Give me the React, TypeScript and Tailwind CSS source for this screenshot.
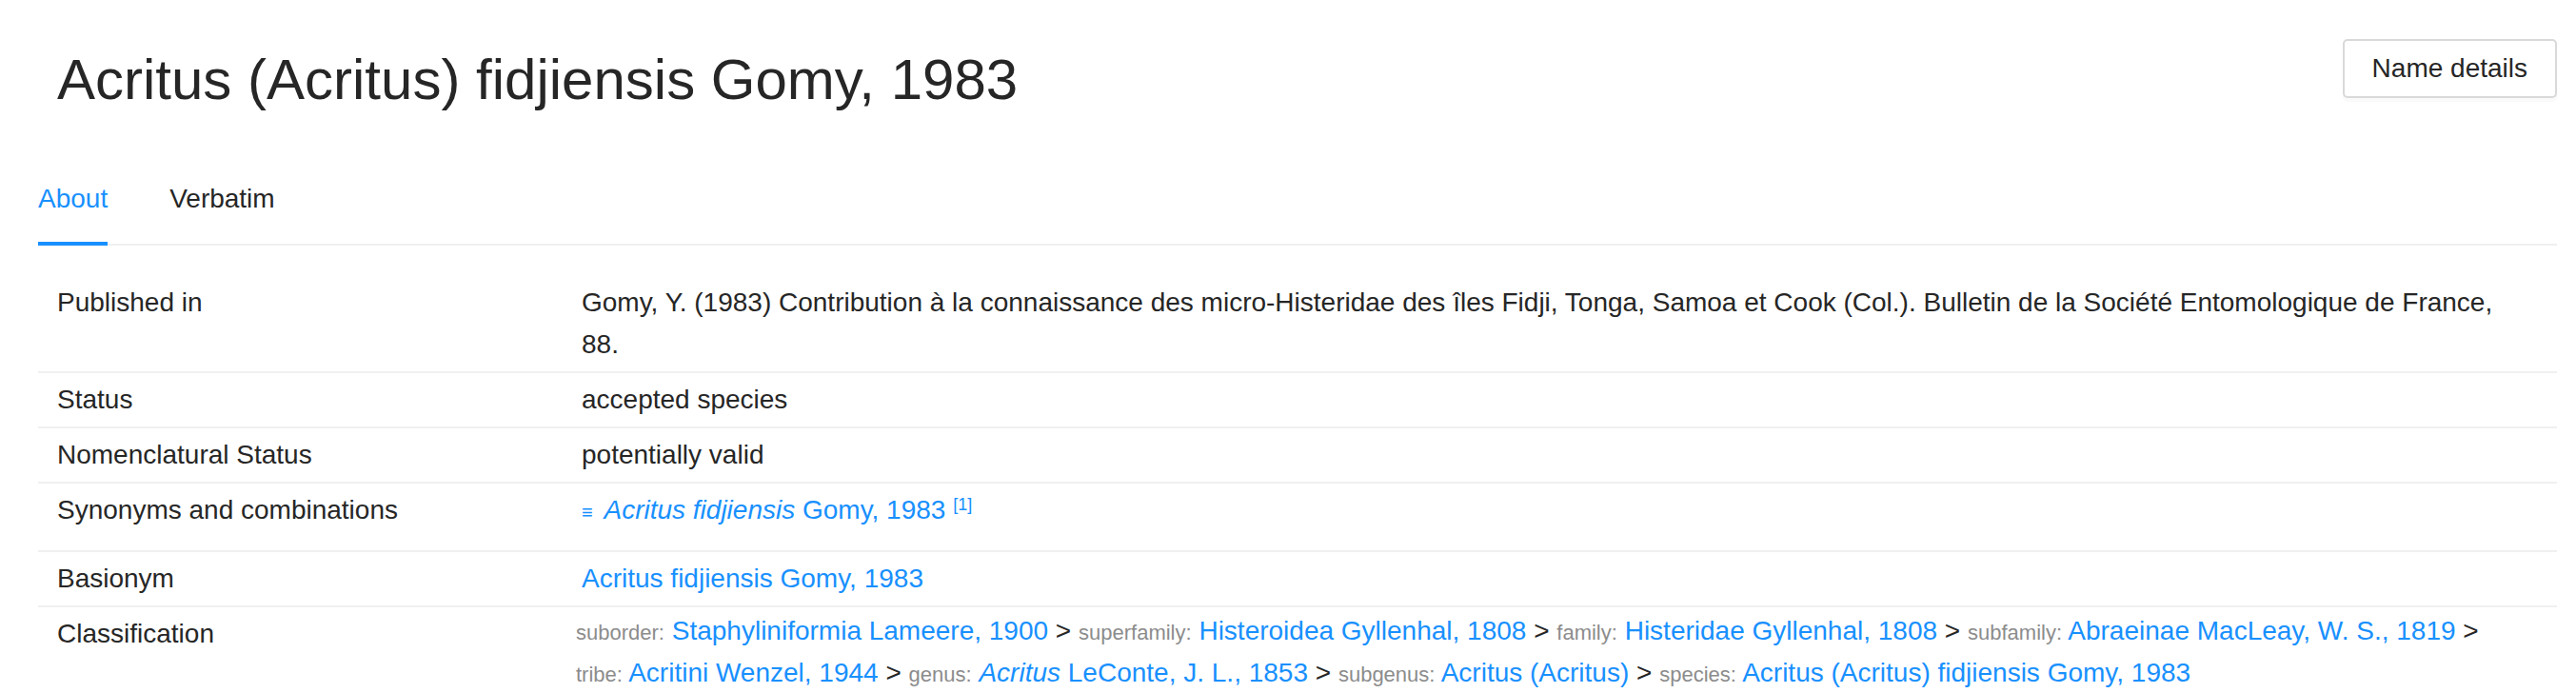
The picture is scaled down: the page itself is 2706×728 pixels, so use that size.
import React from 'react';

type Rank = { rank: string; name: React.ReactNode };

const lineOne: Rank[] = [
  { rank: 'suborder', name: 'Staphyliniformia Lameere, 1900' },
  { rank: 'superfamily', name: 'Histeroidea Gyllenhal, 1808' },
  { rank: 'family', name: 'Histeridae Gyllenhal, 1808' },
  { rank: 'subfamily', name: 'Abraeinae MacLeay, W. S., 1819' },
];

const lineTwo: Rank[] = [
  { rank: 'tribe', name: 'Acritini Wenzel, 1944' },
  {
    rank: 'genus',
    name: (
      <>
        <i>Acritus</i> LeConte, J. L., 1853
      </>
    ),
  },
  { rank: 'subgenus', name: 'Acritus (Acritus)' },
  { rank: 'species', name: 'Acritus (Acritus) fidjiensis Gomy, 1983' },
];

function RankLine({ items, trailing }: { items: Rank[]; trailing: boolean }) {
  return (
    <div className="whitespace-nowrap">
      {items.map((item, i) => (
        <React.Fragment key={item.rank}>
          <span className="text-[22px] leading-none text-[#8c8c8c]">{item.rank}:</span>{' '}
          <a className="text-[#1890ff]">{item.name}</a>
          {(i < items.length - 1 || trailing) && (
            <span className="text-[#262626]"> &gt; </span>
          )}
        </React.Fragment>
      ))}
    </div>
  );
}

function Row({
  label,
  children,
  valueClass = '',
  last = false,
}: {
  label: string;
  children: React.ReactNode;
  valueClass?: string;
  last?: boolean;
}) {
  return (
    <div
      className={`grid grid-cols-[551px_1fr] ${
        last ? '' : 'border-b-2 border-[#f0f0f0]'
      }`}
    >
      <div className="px-[20px] py-[6px]">{label}</div>
      <div className={`px-[20px] py-[6px] ${valueClass}`}>{children}</div>
    </div>
  );
}

export default function App() {
  return (
    <div
      className="min-h-[728px] bg-white pl-[40px] pr-[20px] text-[28px] leading-[44px] text-[#262626]"
      style={{ fontFamily: '"Liberation Sans", Arial, Helvetica, sans-serif' }}
    >
      <div className="flex items-start justify-between pt-[41px]">
        <h1 className="mt-[7px] pl-[20px] text-[60px] font-normal leading-[72px]">
          Acritus (Acritus) fidjiensis Gomy, 1983
        </h1>
        <button className="flex h-[62px] items-center rounded-[5px] border-2 border-[#d9d9d9] bg-white px-[29px] text-[28px] text-[#262626] shadow-[0_4px_0_rgba(0,0,0,0.02)]">
          Name details
        </button>
      </div>

      <div className="mt-[43px] flex border-b-2 border-[#f0f0f0]">
        <div className="-mb-[2px] border-b-4 border-[#1890ff] pt-[24px] pb-[21px] text-[#1890ff]">
          About
        </div>
        <div className="ml-[65px] pt-[24px] pb-[25px]">Verbatim</div>
      </div>

      <div className="mt-[32px]">
        <Row label="Published in">
          <div className="whitespace-nowrap">
            Gomy, Y. (1983) Contribution à la connaissance des micro-Histeridae
            des îles Fidji, Tonga, Samoa et Cook (Col.). Bulletin de la Société
            Entomologique de France,
          </div>
          <div>88.</div>
        </Row>
        <Row label="Status">accepted species</Row>
        <Row label="Nomenclatural Status">potentially valid</Row>
        <Row label="Synonyms and combinations" valueClass="pb-[20px]">
          <a className="text-[#1890ff]">
            <span className="mr-[4px] text-[20px] leading-none">≡</span>{' '}
            <i>Acritus fidjiensis</i> Gomy, 1983{' '}
            <sup className="text-[18px]">[1]</sup>
          </a>
        </Row>
        <Row label="Basionym">
          <a className="text-[#1890ff]">Acritus fidjiensis Gomy, 1983</a>
        </Row>
        <Row label="Classification" valueClass="-mt-[3px] pl-[14px]" last>
          <RankLine items={lineOne} trailing />
          <RankLine items={lineTwo} trailing={false} />
        </Row>
      </div>
    </div>
  );
}
